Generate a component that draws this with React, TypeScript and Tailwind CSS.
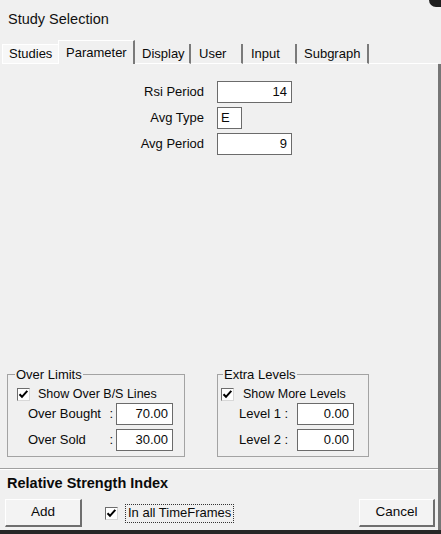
import React from "react";

const Check = () => (
  <div className="w-[13px] h-[13px] shrink-0 bg-white border border-t-[#6d6d6d] border-l-[#6d6d6d] border-r-[#d8d8d8] border-b-[#d8d8d8] flex items-center justify-center">
    <svg width="11" height="11" viewBox="0 0 11 11">
      <path d="M1.5 5.2 L4 7.8 L9.3 1.8" fill="none" stroke="#000" strokeWidth="2" />
    </svg>
  </div>
);

const Field = ({ value, w, align = "right" }: { value: string; w: string; align?: "right" | "left" }) => (
  <div
    className={`${w} h-[22px] bg-white border border-[#6b6b6b] flex items-center text-[13px] ${
      align === "right" ? "justify-end pr-[4px]" : "justify-start pl-[3px]"
    }`}
  >
    {value}
  </div>
);

export default function App() {
  const tabBase = "h-[20px] flex items-center text-[13px] border-b border-white";
  return (
    <div className="w-[441px] h-[534px] bg-[#f0f0f0] flex flex-col overflow-hidden font-['Liberation_Sans',Arial,sans-serif] text-[#0a0a0a]">
      {/* title */}
      <div className="h-[40px] flex justify-between shrink-0">
        <div className="pl-[8px] pt-[10px] text-[14.5px] leading-[18px] text-[#111]">Study Selection</div>
        <div className="w-[12px] h-[7px] rounded-bl-[12px] bg-[#1e1e1e]" />
      </div>

      {/* tabs */}
      <div className="h-[24px] flex items-end pl-[2px] pr-[3px] shrink-0">
        <div className={`${tabBase} w-[56px] pl-[6px] bg-[#f7f7f7] border-t border-t-white border-l border-l-white`}>Studies</div>
        <div className="h-[24px] w-[77px] flex items-start pt-[2px] pl-[7px] text-[13px] border-t border-l border-white border-r-2 border-r-[#7a7a7a] bg-[#f0f0f0]">
          Parameter
        </div>
        <div className={`${tabBase} w-[56px] pl-[7px] border-r-2 border-r-[#7a7a7a]`}>Display</div>
        <div className={`${tabBase} w-[52px] pl-[8px] border-r-2 border-r-[#7a7a7a]`}>User</div>
        <div className={`${tabBase} w-[54px] pl-[8px] border-r-2 border-r-[#7a7a7a]`}>Input</div>
        <div className={`${tabBase} w-[72px] pl-[7px] border-r-2 border-r-[#7a7a7a]`}>Subgraph</div>
        <div className="flex-1 h-[20px] border-b border-white" />
      </div>

      <div className="flex-1 flex flex-col border-r-[3px] border-[#767676]">
        {/* panel */}
        <div className="h-[404px] flex flex-col pt-[17px] pb-[11px] shrink-0">
          <div className="flex flex-col gap-[4px] text-[13px]">
            <div className="flex items-center">
              <div className="w-[204px] text-right">Rsi Period</div>
              <div className="ml-[13px]"><Field value="14" w="w-[75px]" /></div>
            </div>
            <div className="flex items-center">
              <div className="w-[204px] text-right">Avg Type</div>
              <div className="ml-[13px]"><Field value="E" w="w-[25px]" align="left" /></div>
            </div>
            <div className="flex items-center">
              <div className="w-[204px] text-right">Avg Period</div>
              <div className="ml-[13px]"><Field value="9" w="w-[75px]" /></div>
            </div>
          </div>

          <div className="mt-auto flex items-end text-[13px]">
            <fieldset className="ml-[7px] w-[178px] border border-[#a3a3a3] px-0 pb-[5px]">
              <legend className="ml-[7px] px-[1px] leading-[15px]">Over Limits</legend>
              <div className="flex items-center h-[14px] mt-[5px] pl-[9px] gap-[8px]">
                <Check />
                <span className="text-[12.5px]">Show Over B/S Lines</span>
              </div>
              <div className="flex items-center mt-[2px] pl-[20px]">
                <div className="w-[86px] flex justify-between pr-[1px]">
                  <span>Over Bought</span>
                  <span>:</span>
                </div>
                <div className="ml-[2px]"><Field value="70.00" w="w-[57px]" /></div>
              </div>
              <div className="flex items-center mt-[4px] pl-[20px]">
                <div className="w-[86px] flex justify-between pr-[1px]">
                  <span>Over Sold</span>
                  <span>:</span>
                </div>
                <div className="ml-[2px]"><Field value="30.00" w="w-[57px]" /></div>
              </div>
            </fieldset>

            <fieldset className="ml-[32px] w-[152px] border border-[#a3a3a3] px-0 pb-[5px]">
              <legend className="ml-[5px] px-[1px] leading-[15px]">Extra Levels</legend>
              <div className="flex items-center h-[14px] mt-[5px] pl-[3px] gap-[9px]">
                <Check />
                <span className="text-[12.5px]">Show More Levels</span>
              </div>
              <div className="flex items-center mt-[2px] pl-[21px]">
                <div className="w-[55px]">Level 1 :</div>
                <div className="ml-[3px]"><Field value="0.00" w="w-[57px]" /></div>
              </div>
              <div className="flex items-center mt-[4px] pl-[21px]">
                <div className="w-[55px]">Level 2 :</div>
                <div className="ml-[3px]"><Field value="0.00" w="w-[57px]" /></div>
              </div>
            </fieldset>
          </div>
        </div>

        {/* bottom */}
        <div className="flex-1 flex flex-col border-t border-[#a0a0a0]">
          <div className="border-t border-white" />
          <div className="pl-[7px] pt-[5px] text-[14.5px] leading-[17px] font-bold">Relative Strength Index</div>
          <div className="mt-[7px] flex items-center pl-[5px] pr-[3px]">
            <div className="w-[77px] h-[28px] bg-[#f3f3f3] border-t border-l border-white border-r-2 border-b-2 border-r-[#6e6e6e] border-b-[#6e6e6e] flex items-center justify-center text-[13.5px]">
              Add
            </div>
            <div className="ml-[23px] flex items-center">
              <Check />
              <div className="ml-[7px] h-[19px] px-[2px] flex items-center border border-dotted border-[#333] text-[13px]">
                In all TimeFrames
              </div>
            </div>
            <div className="ml-auto w-[76px] h-[28px] bg-[#f3f3f3] border-t border-l border-white border-r-2 border-b-2 border-r-[#6e6e6e] border-b-[#6e6e6e] flex items-center justify-center text-[13.5px]">
              Cancel
            </div>
          </div>
        </div>
      </div>
      <div className="h-[4px] bg-[#262626] shrink-0" />
    </div>
  );
}
